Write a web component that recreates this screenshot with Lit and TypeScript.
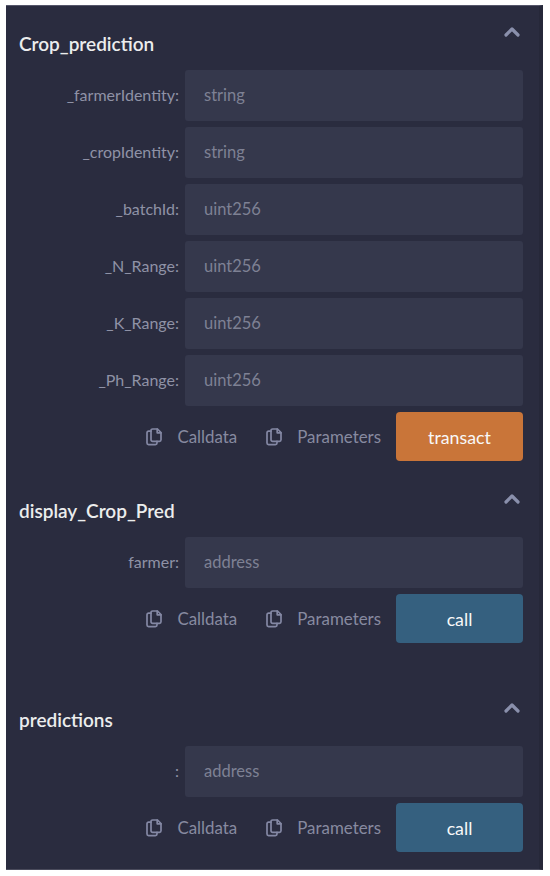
import { LitElement, html, css } from "lit";
import { customElement } from "lit/decorators.js";

const copyIcon = html`<svg class="copy" viewBox="0 0 16 18" width="16" height="18" fill="none" stroke="currentColor" stroke-width="1.700" stroke-linejoin="round" stroke-linecap="round">
  <path d="M5 3.200H2.600A1.600 1.600 0 0 0 1 4.800v10.200A1.600 1.600 0 0 0 2.600 16.600h6.800A1.600 1.600 0 0 0 11 15v-1.600"/>
  <path d="M5 2.600A1.600 1.600 0 0 1 6.600 1h4.900L15 4.500v7.300a1.600 1.600 0 0 1-1.600 1.600H6.600A1.600 1.600 0 0 1 5 11.800z"/>
  <path d="M11.200 1v3.800H15"/>
</svg>`;

const chevron = html`<svg class="chev" viewBox="0 0 16 11" width="16" height="11" fill="none" stroke="currentColor" stroke-width="3.200" stroke-linecap="round" stroke-linejoin="round"><path d="M2 9l6-6 6 6"/></svg>`;

interface Section { title: string; fields: [string, string][]; action: string; kind: string; cls: string; }

const sections: Section[] = [
  { title: "Crop_prediction", cls: "s1", action: "transact", kind: "orange", fields: [
    ["_farmerIdentity:", "string"], ["_cropIdentity:", "string"], ["_batchId:", "uint256"],
    ["_N_Range:", "uint256"], ["_K_Range:", "uint256"], ["_Ph_Range:", "uint256"] ] },
  { title: "display_Crop_Pred", cls: "s2", action: "call", kind: "blue", fields: [["farmer:", "address"]] },
  { title: "predictions", cls: "s3", action: "call", kind: "blue", fields: [[":", "address"]] },
];

@customElement("app-root")
export class AppRoot extends LitElement {
  static styles = css`
    :host { display: block; width: 550px; height: 876px; background: #fff; font-family: Lato, "Open Sans", sans-serif; padding: 5px 7px 6px 6px; box-sizing: border-box; }
    .panel { height: 865px; background: #2a2c3f; border-right: 4px solid #262839; box-sizing: border-box; padding: 0 16px 0 13px; border-top: 1px solid #55566a; border-bottom: 1px solid #4a4b5c; }
    .section { display: flex; flex-direction: column; }
    .s2 { margin-top: 12px; }
    .s3 { margin-top: 39px; }
    .head { height: 64px; display: flex; justify-content: space-between; align-items: flex-start; box-sizing: border-box; }
    .title { margin: 26px 0 0; color: #eceded; font-size: 19px; font-weight: 600; line-height: 24px; }
    .chev { color: #8a90ac; margin: 20px 3px 0 0; }
    .rows { display: flex; flex-direction: column; gap: 6px; }
    .row { display: flex; align-items: center; justify-content: flex-end; gap: 6px; }
    .label { color: #8f92a6; font-size: 16px; text-align: right; padding-bottom: 2px; }
    .input { width: 338px; height: 51px; background: #35384c; border-radius: 3px; color: #7e8194; font-size: 16.500px; padding: 0 0 1px 19px; box-sizing: border-box; display: flex; align-items: center; }
    .actions { display: flex; align-items: center; justify-content: flex-end; margin-top: 6px; height: 49px; }
    .link { display: flex; align-items: center; color: #878aa0; font-size: 16.900px; }
    .link .copy { color: #8488a4; margin-right: 15px; }
    .calldata { margin-right: 29px; }
    .params { margin-right: 15px; }
    .btn { width: 127px; height: 49px; border-radius: 4px; color: #f8f8f8; font-size: 17.800px; display: flex; align-items: center; justify-content: center; box-sizing: border-box; }
    .orange { background: #c97539; }
    .blue { background: #35607f; }
  `;

  render() {
    return html`<div class="panel">
      ${sections.map((s) => html`<section class="section ${s.cls}">
        <div class="head"><h2 class="title">${s.title}</h2>${chevron}</div>
        <div class="rows">
          ${s.fields.map(([l, p]) => html`<div class="row"><span class="label">${l}</span><div class="input">${p}</div></div>`)}
        </div>
        <div class="actions">
          <span class="link calldata">${copyIcon}Calldata</span>
          <span class="link params">${copyIcon}Parameters</span>
          <div class="btn ${s.kind}">${s.action}</div>
        </div>
      </section>`)}
    </div>`;
  }
}
